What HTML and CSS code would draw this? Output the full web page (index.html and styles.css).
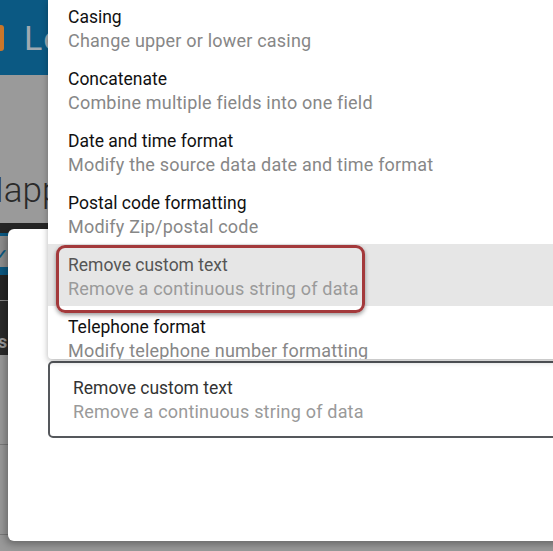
FILE: index.html
```html
<!DOCTYPE html>
<html lang="en">
<head>
    <meta charset="UTF-8">
    <meta name="viewport" content="width=device-width, initial-scale=1.0">
    <title>Field formatting</title>
    <link rel="stylesheet" href="styles.css">
</head>
<body>
    <div class="page">
        <header class="topbar">
            <span class="logo-mark"></span>
            <span class="logo-text">Locate</span>
        </header>

        <div class="content">
            <h1 class="page-title">Happy path</h1>
            <div class="toolbar">
                <div class="toolbar-btn"><span class="tick">&#10003;</span></div>
            </div>
            <div class="dark-row"></div>
            <div class="dark-panel"><span class="panel-text">s</span></div>
            <div class="grid-row"></div>
            <div class="grid-row"></div>
        </div>
    </div>

    <div class="modal">
        <div class="selected-field">
            <div class="field-title">Remove custom text</div>
            <div class="field-desc">Remove a continuous string of data</div>
        </div>
    </div>

    <div class="menu">
        <ul class="menu-list">
            <li class="menu-item">
                <div class="item-title">Casing</div>
                <div class="item-desc">Change upper or lower casing</div>
            </li>
            <li class="menu-item">
                <div class="item-title">Concatenate</div>
                <div class="item-desc">Combine multiple fields into one field</div>
            </li>
            <li class="menu-item">
                <div class="item-title">Date and time format</div>
                <div class="item-desc">Modify the source data date and time format</div>
            </li>
            <li class="menu-item">
                <div class="item-title">Postal code formatting</div>
                <div class="item-desc">Modify Zip/postal code</div>
            </li>
            <li class="menu-item selected">
                <div class="item-title">Remove custom text</div>
                <div class="item-desc">Remove a continuous string of data</div>
            </li>
            <li class="menu-item">
                <div class="item-title">Telephone format</div>
                <div class="item-desc">Modify telephone number formatting</div>
            </li>
        </ul>
    </div>

    <div class="highlight"></div>
</body>
</html>
```

FILE: styles.css
```css
html, body {
    margin: 0;
    padding: 0;
}

body {
    font-family: Roboto, 'Liberation Sans', sans-serif;
    width: 553px;
    height: 551px;
    overflow: hidden;
    position: relative;
    background-color: #9a9a9a;
}

/* page behind the dialog (already dimmed) */
.topbar {
    height: 75px;
    background-color: #0b5983;
    display: flex;
    align-items: center;
    gap: 20px;
}

.logo-mark {
    width: 16px;
    height: 26px;
    margin-left: -12px;
    background-color: #c9762a;
    border-radius: 3px;
}

.logo-text {
    font-size: 34px;
    color: #9fa9b1;
    letter-spacing: 1px;
}

.content {
    padding-top: 96px;
}

.page-title {
    margin: 0 0 12px -21px;
    font-size: 35px;
    font-weight: 300;
    color: #2a2a2a;
    line-height: 40px;
    white-space: nowrap;
}

.toolbar {
    height: 63px;
    background-color: #252525;
    padding-top: 10px;
    box-sizing: border-box;
}

.toolbar-btn {
    width: 9px;
    height: 42px;
    background-color: #8e8e8e;
    border-top: 3px solid #0b5983;
    border-bottom: 8px solid #0b5983;
    box-sizing: border-box;
    position: relative;
    overflow: hidden;
}

.tick {
    position: absolute;
    left: -4px;
    top: 10px;
    font-size: 14px;
    color: #0b5983;
    font-weight: bold;
}

.dark-row {
    height: 14px;
    background-color: #252525;
    border-bottom: 1px solid #8a8a8a;
}

.dark-panel {
    height: 54px;
    background-color: #2b2b2b;
    position: relative;
}

.panel-text {
    position: absolute;
    left: -2px;
    top: 30px;
    font-size: 18px;
    font-weight: bold;
    color: #9a9a9a;
}

.grid-row {
    height: 89px;
    border-bottom: 1px solid #7a7a7a;
}

/* dialog */
.modal {
    position: absolute;
    left: 8px;
    top: 229px;
    width: 620px;
    height: 312px;
    background-color: #fff;
    border-radius: 6px;
    box-shadow: -2px 3px 8px rgba(0, 0, 0, 0.35);
    padding: 132px 0 0 40px;
    box-sizing: border-box;
}

.selected-field {
    border: 2px solid #55585c;
    border-radius: 5px;
    padding: 14px 23px 13px;
    line-height: 23px;
}

.field-title {
    font-size: 17.5px;
    color: #333;
}

.field-desc {
    font-size: 18px;
    letter-spacing: 0.2px;
    color: #9a9a9a;
}

/* dropdown */
.menu {
    position: absolute;
    left: 48px;
    top: 0;
    width: 560px;
    height: 359px;
    background-color: #fff;
    overflow: hidden;
    border-radius: 0 0 4px 4px;
    box-shadow: 0 2px 6px rgba(0, 0, 0, 0.3);
}

.menu-list {
    list-style: none;
    margin: -4px 0 0;
    padding: 0;
}

.menu-item {
    height: 62px;
    padding: 10px 20px 0;
    box-sizing: border-box;
    line-height: 23px;
}

.item-title {
    font-size: 17.5px;
    color: #111;
}

.item-desc {
    font-size: 18px;
    letter-spacing: 0.2px;
    color: #878787;
}

.menu-item.selected {
    background-color: #e6e6e6;
}

.menu-item.selected .item-title {
    color: #555;
}

.menu-item.selected .item-desc {
    color: #9a9a9a;
}

/* annotation */
.highlight {
    position: absolute;
    left: 56px;
    top: 245px;
    width: 309px;
    height: 68px;
    border: 3px solid #a3393b;
    border-radius: 9px;
    box-sizing: border-box;
    box-shadow: 0 2px 4px rgba(0, 0, 0, 0.4);
}
```
